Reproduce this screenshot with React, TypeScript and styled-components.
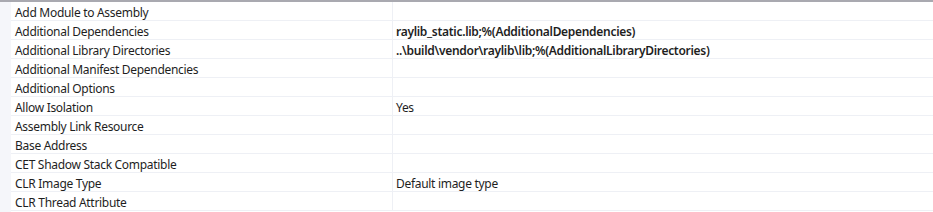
import React from "react";
import styled, {createGlobalStyle} from "styled-components";

const GlobalStyle = createGlobalStyle`
  html, body {
    margin: 0;
    padding: 0;
    background: #ffffff;
  }
  body {
    font-family: "Segoe UI", "Noto Sans", "Open Sans", sans-serif;
    font-size: 12px;
    letter-spacing: -0.3px;
    color: #1e1e1e;
  }
`;

type Prop = {name: string; value?: string; bold?: boolean};

const props: Prop[] = [
  {name: "Add Module to Assembly"},
  {name: "Additional Dependencies", value: "raylib_static.lib;%(AdditionalDependencies)", bold: true},
  {name: "Additional Library Directories", value: "..\\build\\vendor\\raylib\\lib;%(AdditionalLibraryDirectories)", bold: true},
  {name: "Additional Manifest Dependencies"},
  {name: "Additional Options"},
  {name: "Allow Isolation", value: "Yes"},
  {name: "Assembly Link Resource"},
  {name: "Base Address"},
  {name: "CET Shadow Stack Compatible"},
  {name: "CLR Image Type", value: "Default image type"},
  {name: "CLR Thread Attribute"},
];

export default function App() {
  return (
    <>
      <GlobalStyle />
      <Grid>
        {props.map((p) => (
          <Row key={p.name}>
            <Gutter />
            <Name>{p.name}</Name>
            <Value $bold={p.bold}>{p.value}</Value>
          </Row>
        ))}
      </Grid>
    </>
  );
}

const Grid = styled.div`
  width: 933px;
  height: 212px;
  border-top: 2px solid #a9a9b0;
  box-sizing: border-box;
  overflow: hidden;
`;
const Row = styled.div`
  display: grid;
  grid-template-columns: 11px 382px 1fr;
  height: 19px;
  box-sizing: border-box;
  border-bottom: 1px solid #eef0f5;
`;
const Gutter = styled.div`
  background: #f5f6fa;
  margin-bottom: -1px;
`;
const Name = styled.div`
  padding: 2px 0 0 4px;
  line-height: 17px;
  white-space: nowrap;
  border-right: 1px solid #eef0f5;
`;
const Value = styled.div<{$bold?: boolean}>`
  padding: 2px 0 0 3px;
  line-height: 17px;
  white-space: nowrap;
  font-weight: ${(p) => (p.$bold ? 600 : 400)};
`;
